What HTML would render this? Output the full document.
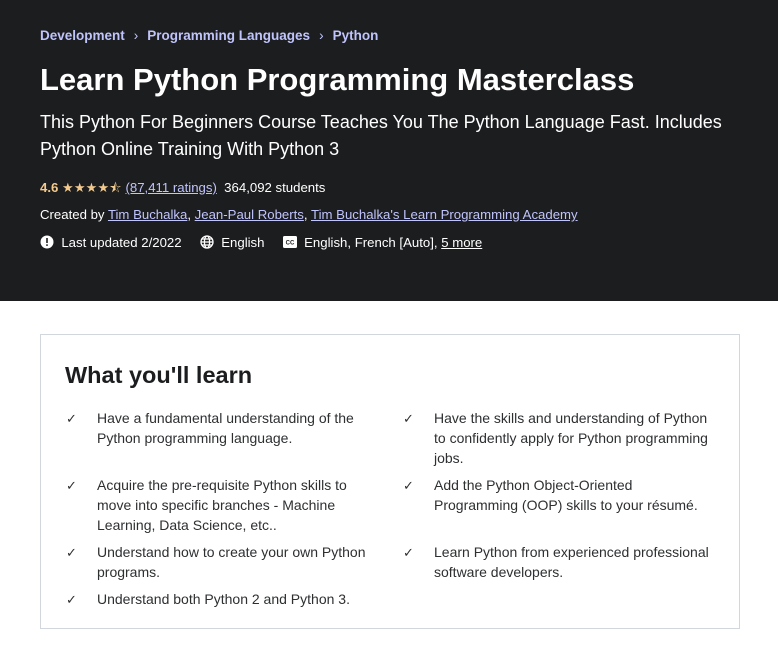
<!DOCTYPE html>
<html><head><meta charset="utf-8"><style>
*{margin:0;padding:0;box-sizing:border-box}
body{width:778px;height:645px;background:#fff;font-family:"Liberation Sans",sans-serif;color:#1c1d1f;overflow:hidden;position:relative}
.top{position:absolute;left:0;top:0;width:778px;height:301px;background:#1c1d1f;color:#fff}
.bc{position:absolute;left:40px;top:28px;font-size:13.5px;font-weight:bold;color:#c0c4fc;white-space:nowrap}
.bc span.s{color:#c0c4fc;margin:0 9px;font-weight:normal}
h1{position:absolute;left:40px;top:62px;font-size:31px;font-weight:bold;white-space:nowrap}
.sub{position:absolute;left:40px;top:109px;font-size:18px;line-height:27px;width:720px}
.row{position:absolute;left:40px;font-size:13.2px;white-space:nowrap}
a{color:#c0c4fc;text-decoration:underline}
.star{color:#f3ca8c}
.box{position:absolute;left:40px;top:334px;width:700px;height:295px;border:1px solid #d1d7dc}
h2{position:absolute;left:24px;top:27px;font-size:23.5px;font-weight:bold}
.it{position:absolute;font-size:14px;line-height:20px;color:#2d2f31;width:285px}
.ck{position:absolute;font-size:13px;color:#2d2f31}
</style></head><body>
<div class="top">
<div class="bc">Development<span class="s">›</span>Programming Languages<span class="s">›</span>Python</div>
<h1>Learn Python Programming Masterclass</h1>
<div class="sub">This Python For Beginners Course Teaches You The Python Language Fast. Includes Python Online Training With Python 3</div>
<div class="row" style="top:179px"><b class="star">4.6</b> <span class="star">★★★★⯪</span> <a>(87,411 ratings)</a>&nbsp; 364,092 students</div>
<div class="row" style="top:207px">Created by <a>Tim Buchalka</a>, <a>Jean-Paul Roberts</a>, <a>Tim Buchalka's Learn Programming Academy</a></div>
<div class="row" style="top:235px">
<svg width="14" height="14" viewBox="0 0 14 14" style="vertical-align:-2px"><circle cx="7" cy="7" r="6.5" fill="#fff"/><rect x="6.2" y="3" width="1.6" height="5" fill="#1c1d1f"/><rect x="6.2" y="9.3" width="1.6" height="1.6" fill="#1c1d1f"/></svg>&nbsp; Last updated 2/2022 &nbsp;&nbsp;&nbsp;
<svg width="14" height="14" viewBox="0 0 14 14" style="vertical-align:-2px" fill="none" stroke="#fff" stroke-width="1.3"><circle cx="7" cy="7" r="6"/><ellipse cx="7" cy="7" rx="2.6" ry="6"/><path d="M1 7h12M2 4h10M2 10h10"/></svg>&nbsp; English &nbsp;&nbsp;&nbsp;
<svg width="14" height="12" viewBox="0 0 14 12" style="vertical-align:-1px"><rect width="14" height="12" rx="1.5" fill="#fff"/><text x="7" y="8.5" font-size="6" font-weight="bold" text-anchor="middle" fill="#1c1d1f" font-family="Liberation Sans">CC</text></svg>&nbsp; English, French [Auto], <span style="text-decoration:underline">5 more</span></div>
</div>
<div class="box">
<h2>What you'll learn</h2>
<div class="ck" style="left:25px;top:76px">✓</div><div class="it" style="left:56px;top:73px">Have a fundamental understanding of the Python programming language.</div>
<div class="ck" style="left:362px;top:76px">✓</div><div class="it" style="left:393px;top:73px">Have the skills and understanding of Python to confidently apply for Python programming jobs.</div>
<div class="ck" style="left:25px;top:143px">✓</div><div class="it" style="left:56px;top:140px">Acquire the pre-requisite Python skills to move into specific branches - Machine Learning, Data Science, etc..</div>
<div class="ck" style="left:362px;top:143px">✓</div><div class="it" style="left:393px;top:140px">Add the Python Object-Oriented Programming (OOP) skills to your résumé.</div>
<div class="ck" style="left:25px;top:210px">✓</div><div class="it" style="left:56px;top:207px">Understand how to create your own Python programs.</div>
<div class="ck" style="left:362px;top:210px">✓</div><div class="it" style="left:393px;top:207px">Learn Python from experienced professional software developers.</div>
<div class="ck" style="left:25px;top:257px">✓</div><div class="it" style="left:56px;top:254px">Understand both Python 2 and Python 3.</div>
</div>
</body></html>
